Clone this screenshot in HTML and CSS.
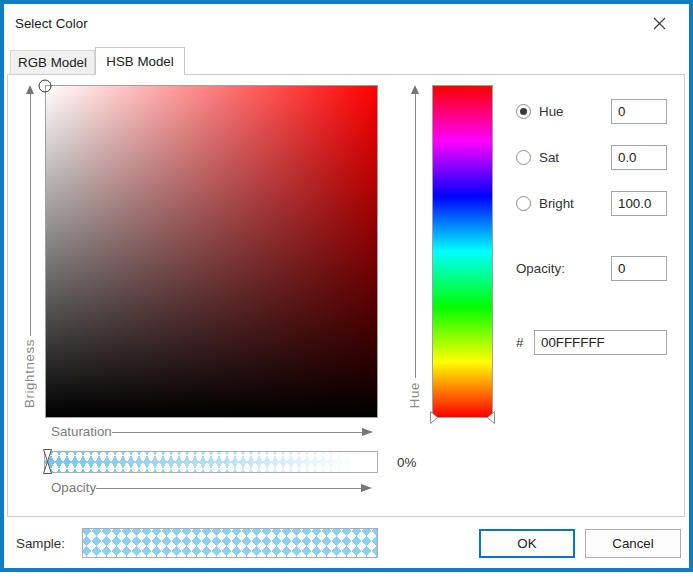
FILE: index.html
```html
<!DOCTYPE html>
<html>
<head>
<meta charset="utf-8">
<link rel="stylesheet" href="styles.css">
</head>
<body>
<div class="window">
  <div class="titlebar">
    <span class="title">Select Color</span>
    <svg class="close" width="13" height="13" viewBox="0 0 13 13"><path d="M1 1 L12 12 M12 1 L1 12" stroke="#444" stroke-width="1.3" fill="none"/></svg>
  </div>
  <div class="tabs">
    <div class="tab">RGB Model</div>
    <div class="tab active">HSB Model</div>
  </div>
  <div class="panel">
    <div class="axis-v brightness-axis">
      <span class="arrow-up"></span><span class="vline"></span><span class="vlabel">Brightness</span>
    </div>
    <div class="sb-square">
      <svg class="marker" width="14" height="14" viewBox="0 0 14 14"><circle cx="7" cy="7" r="6" fill="none" stroke="#333" stroke-width="1"/></svg>
    </div>
    <div class="axis-v hue-axis">
      <span class="arrow-up"></span><span class="vline"></span><span class="vlabel hue-label">Hue</span>
    </div>
    <div class="hue-strip">
      <svg class="tri tri-left" width="9" height="13" viewBox="0 0 9 13"><path d="M0.5 0.5 L7.5 6.5 L0.5 12.5 Z" fill="#fff" stroke="#888" stroke-width="1"/></svg>
      <svg class="tri tri-right" width="9" height="13" viewBox="0 0 9 13"><path d="M8.5 0.5 L1.5 6.5 L8.5 12.5 Z" fill="#fff" stroke="#888" stroke-width="1"/></svg>
    </div>
    <div class="controls">
      <div class="ctrl-row">
        <span class="opt"><span class="radio checked"></span>Hue</span>
        <input class="field" type="text" value="0" readonly>
      </div>
      <div class="ctrl-row gap-s">
        <span class="opt"><span class="radio"></span>Sat</span>
        <input class="field" type="text" value="0.0" readonly>
      </div>
      <div class="ctrl-row gap-s">
        <span class="opt"><span class="radio"></span>Bright</span>
        <input class="field" type="text" value="100.0" readonly>
      </div>
      <div class="ctrl-row gap-m">
        <span class="opt">Opacity:</span>
        <input class="field" type="text" value="0" readonly>
      </div>
      <div class="ctrl-row gap-l">
        <span class="opt">#</span>
        <input class="field wide" type="text" value="00FFFFFF" readonly>
      </div>
    </div>
    <div class="axis-h sat-axis">
      <span class="hlabel">Saturation</span><span class="hline"></span><span class="arrow-right"></span>
    </div>
    <div class="opacity-slider">
      <svg class="hourglass" width="9" height="25" viewBox="0 0 9 25"><path d="M0.5 0.5 H8.5 L4.5 12.5 L8.5 24.5 H0.5 L4.5 12.5 Z" fill="#fff" stroke="#555" stroke-width="1"/></svg>
    </div>
    <div class="pct">0%</div>
    <div class="axis-h opacity-axis">
      <span class="hlabel">Opacity</span><span class="hline"></span><span class="arrow-right"></span>
    </div>
  </div>
  <div class="bottom">
    <span class="sample-label">Sample:</span>
    <div class="sample"></div>
    <div class="buttons">
      <button class="btn default">OK</button>
      <button class="btn">Cancel</button>
    </div>
  </div>
</div>
</body>
</html>
```
FILE: styles.css
```css
* { box-sizing: border-box; }
html, body { margin: 0; padding: 0; background: #fff; }
body {
  font-family: "Liberation Sans", Arial, sans-serif;
  font-size: 13.33px;
  color: #222;
}
.window {
  width: 693px;
  height: 572px;
  border: 4px solid #0f7dc2;
  background: #fff;
}
.titlebar {
  height: 38px;
  display: flex;
  align-items: center;
  justify-content: space-between;
  padding: 0 23px 0 11px;
}
.title { color: #1a1a1a; }
.close { display: block; }

.tabs {
  margin: 5px 0 0 6px;
  display: flex;
  align-items: flex-end;
}
.tab {
  width: 85px;
  height: 24px;
  border: 1px solid #d6d6d6;
  border-bottom: none;
  background: #f0f0f0;
  display: flex;
  align-items: center;
  justify-content: center;
  color: #222;
}
.tab.active {
  width: 90px;
  height: 28px;
  margin-bottom: -1px;
  background: #fff;
  border-color: #c8c8c8;
  position: relative;
  z-index: 1;
}

.panel {
  height: 443px;
  margin: 0 4px 0 3px;
  border: 1px solid #cccccc;
  padding: 10px 0 0 14px;
  display: grid;
  grid-template-columns: 23px 333px 54px 61px 174px;
  grid-template-rows: 333px 33px 22px 30px;
}

.axis-v {
  width: 16px;
  display: flex;
  flex-direction: column;
  align-items: center;
  padding-bottom: 10px;
}
.brightness-axis { grid-column: 1; grid-row: 1; }
.hue-axis { grid-column: 3; grid-row: 1; justify-self: end; margin-right: 9px; }
.arrow-up {
  width: 0; height: 0;
  border-left: 4px solid transparent;
  border-right: 4px solid transparent;
  border-bottom: 9px solid #767676;
}
.vline { flex: 1; width: 1px; background: #8a8a8a; }
.vlabel {
  writing-mode: vertical-rl;
  transform: rotate(180deg);
  color: #8a8a8a;
  letter-spacing: 0.6px;
  line-height: 14px;
  margin-top: 3px;
}
.hue-label { margin-top: 4px; }

.sb-square {
  grid-column: 2; grid-row: 1;
  border: 1px solid #a0a0a0;
  position: relative;
  background:
    linear-gradient(to bottom, rgba(0,0,0,0), #000),
    linear-gradient(to right, #fff, #f00);
}
.marker { position: absolute; left: -8px; top: -7px; }

.hue-strip {
  grid-column: 4; grid-row: 1;
  border: 1px solid #a0a0a0;
  position: relative;
  background: linear-gradient(to bottom, #f00 0%, #f0f 16.67%, #00f 33.33%, #0ff 50%, #0f0 66.67%, #ff0 83.33%, #f00 100%);
}
.tri { position: absolute; bottom: -7px; }
.tri-left { left: -3px; }
.tri-right { right: -3px; }

.controls {
  grid-column: 5; grid-row: 1 / span 4;
  padding: 14px 0 0 23px;
}
.ctrl-row {
  height: 25px;
  display: flex;
  align-items: center;
  justify-content: space-between;
}
.gap-s { margin-top: 21px; }
.gap-m { margin-top: 40px; }
.gap-l { margin-top: 49px; }
.opt { display: flex; align-items: center; color: #333; }
.radio {
  width: 15px; height: 15px;
  border: 1px solid #8c8c8c;
  border-radius: 50%;
  background: #fff;
  margin-right: 8px;
  display: flex;
  align-items: center;
  justify-content: center;
}
.radio.checked::after {
  content: "";
  width: 7px; height: 7px;
  border-radius: 50%;
  background: #3a3a3a;
}
.field {
  width: 56px; height: 25px;
  border: 1px solid #a6a6a6;
  padding: 0 0 0 6px;
  margin: 0;
  font: inherit;
  color: #222;
  background: #fff;
  outline: none;
}
.field.wide { width: 133px; }

.axis-h {
  display: flex;
  align-items: center;
  height: 14px;
}
.sat-axis { grid-column: 2; grid-row: 2; align-self: start; margin: 7px 5px 0 6px; }
.opacity-axis { grid-column: 2; grid-row: 4; align-self: center; margin: 0 6px 0 6px; }
.hlabel { color: #7a7a7a; line-height: 14px; }
.hline { flex: 1; height: 1px; background: #8a8a8a; }
.arrow-right {
  width: 0; height: 0;
  border-top: 4px solid transparent;
  border-bottom: 4px solid transparent;
  border-left: 11px solid #767676;
}

.opacity-slider {
  grid-column: 2; grid-row: 3;
  margin-left: -1px;
  border: 1px solid #ababab;
  position: relative;
  --d: #74c3ee;
  background-image:
    linear-gradient(to right, rgba(255,255,255,0) 0%, rgba(255,255,255,0.5) 55%, #fff 94%),
    linear-gradient(to top right, var(--d) 25%, transparent 25%),
    linear-gradient(to top left, var(--d) 25%, transparent 25%),
    linear-gradient(to bottom right, var(--d) 25%, transparent 25%),
    linear-gradient(to bottom left, var(--d) 25%, transparent 25%);
  background-size: 100% 100%, 8px 13px, 8px 13px, 8px 13px, 8px 13px;
  background-position: 0 0, 6px -3px, 6px -3px, 6px -3px, 6px -3px;
}
.hourglass { position: absolute; left: -2px; top: -3px; }
.pct { grid-column: 3; grid-row: 3; align-self: center; padding-left: 19px; color: #333; }

.bottom {
  margin-top: 11px;
  height: 30px;
  display: flex;
  align-items: center;
  padding: 0 8px 0 12px;
}
.sample-label { width: 66px; color: #333; }
.sample {
  width: 296px; height: 30px;
  border: 1px solid #ababab;
  --d: #8ccff2;
  background-image:
    linear-gradient(to top right, var(--d) 25%, transparent 25%),
    linear-gradient(to top left, var(--d) 25%, transparent 25%),
    linear-gradient(to bottom right, var(--d) 25%, transparent 25%),
    linear-gradient(to bottom left, var(--d) 25%, transparent 25%);
  background-size: 10px 10px;
  background-position: 4px 2px;
  background-color: #fff;
}
.buttons { margin-left: auto; display: flex; gap: 10px; }
.btn {
  width: 96px; height: 29px;
  border: 1px solid #adadad;
  background: #fdfdfd;
  font: inherit;
  color: #222;
  padding: 0;
  margin: 0;
}
.btn.default { border: 2px solid #0a74c9; }
```
